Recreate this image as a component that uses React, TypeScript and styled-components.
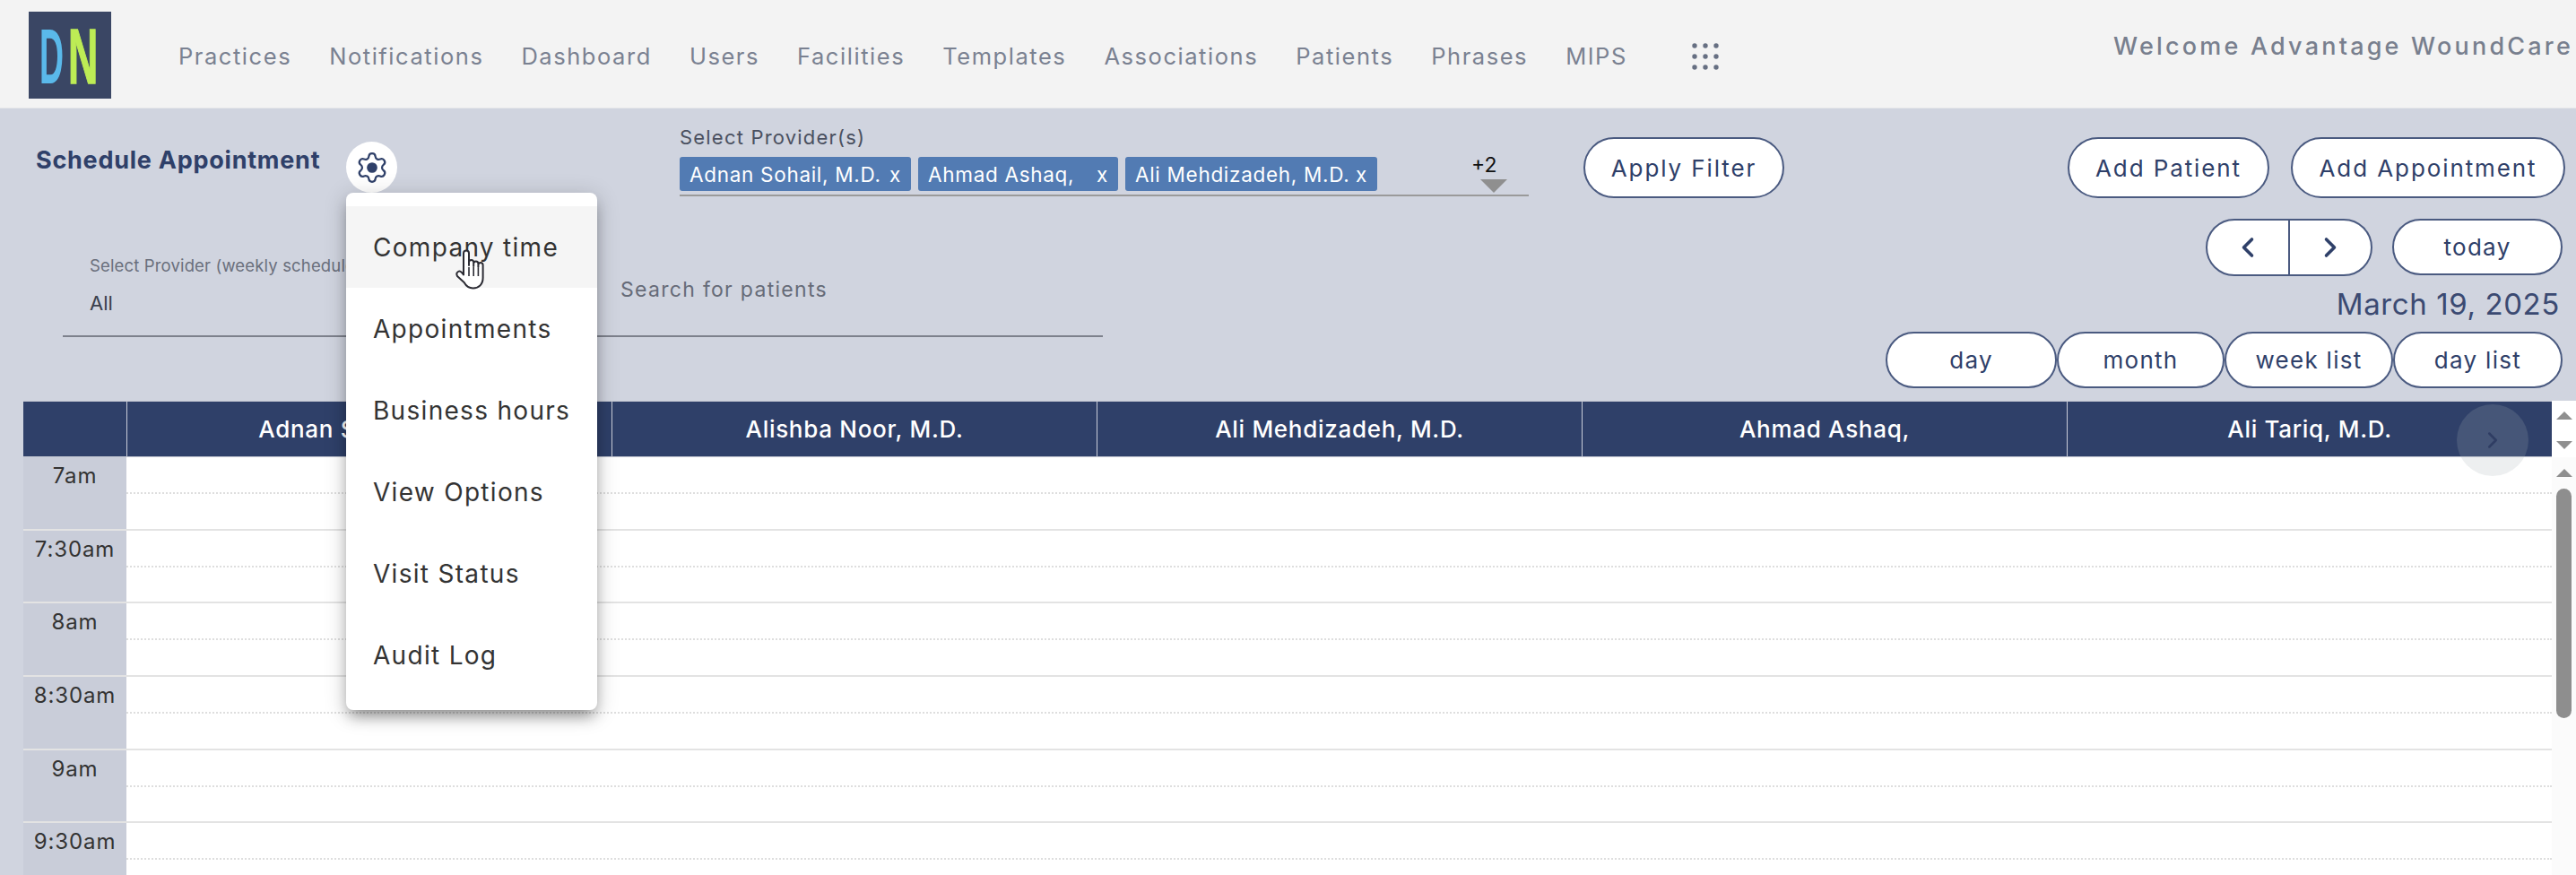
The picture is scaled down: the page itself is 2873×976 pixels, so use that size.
import React from "react";
import styled, { createGlobalStyle } from "styled-components";
import { ChevronLeft, ChevronRight, Settings } from "lucide-react";

const navy = "#2f4069";
const fontStack = `Inter, "Open Sans", "Liberation Sans", sans-serif`;

const GlobalStyle = createGlobalStyle`
  html, body {
    margin: 0;
    padding: 0;
    width: 2873px;
    height: 976px;
    overflow: hidden;
    background: #d0d4df;
    font-family: ${fontStack};
  }
  * {
    box-sizing: border-box;
  }
`;

const Page = styled.div`
  width: 2873px;
  height: 976px;
  overflow: hidden;
  display: flex;
  flex-direction: column;
`;

const Header = styled.header`
  height: 121px;
  flex: none;
  background: #f3f3f3;
  border-bottom: 1px solid #e6e7ea;
  display: flex;
  padding-left: 32px;
`;

const LogoBox = styled.svg`
  width: 92px;
  height: 97px;
  margin-top: 13px;
  flex: none;
  overflow: visible;
`;

const NavList = styled.nav`
  display: flex;
  align-items: center;
  gap: 42px;
  margin-left: 75px;
  height: 125px;
  flex: none;
`;

const NavItem = styled.span`
  font-size: 25.5px;
  letter-spacing: 1.55px;
  color: #7a8191;
  white-space: nowrap;
`;

const DotsIcon = styled.svg`
  width: 32px;
  height: 32px;
  margin-left: 29px;
  flex: none;
`;

const Welcome = styled.div`
  margin-left: auto;
  padding: 35px 3px 0 0;
  font-size: 27px;
  font-weight: 500;
  letter-spacing: 3.2px;
  color: #787f8e;
  white-space: nowrap;
`;

const Toolbar = styled.section`
  height: 326px;
  flex: none;
  display: flex;
  justify-content: space-between;
  padding: 32px 12px 0 40px;
`;

const LeftColumn = styled.div`
  display: flex;
  flex-direction: column;
`;

const TopRow = styled.div`
  display: flex;
  align-items: flex-start;
`;

const Title = styled.h1`
  margin: 10px 0 0;
  width: 346px;
  font-size: 27px;
  line-height: 32px;
  font-weight: 700;
  letter-spacing: 0.75px;
  color: ${navy};
  white-space: nowrap;
`;

const GearWrap = styled.div`
  position: relative;
  width: 57px;
  height: 57px;
  margin-top: 5px;
  flex: none;
`;

const GearButton = styled.div`
  width: 57px;
  height: 57px;
  border-radius: 50%;
  background: #fff;
  display: flex;
  align-items: center;
  justify-content: center;
  color: ${navy};

  svg circle {
    fill: ${navy};
  }
`;

const Menu = styled.ul`
  position: absolute;
  z-index: 5;
  top: 57px;
  left: 0;
  width: 280px;
  margin: 0;
  padding: 15px 0 16px;
  list-style: none;
  background: #fff;
  border-radius: 8px;
  box-shadow: 0 10px 16px -4px rgba(0, 0, 0, 0.38), 0 4px 24px 2px rgba(0, 0, 0, 0.16);
`;

const MenuItem = styled.li<{ $active?: boolean }>`
  height: 91px;
  display: flex;
  align-items: center;
  padding-left: 30px;
  font-size: 28px;
  letter-spacing: 1.3px;
  color: #333;
  background: ${(p) => (p.$active ? "#f5f5f5" : "#fff")};
  white-space: nowrap;
`;

const HandCursor = styled.svg`
  position: absolute;
  z-index: 6;
  left: 120px;
  top: 118px;
  width: 38px;
  height: 48px;
`;

const ProviderField = styled.div`
  width: 947px;
  margin-left: 315px;
  flex: none;
  position: relative;
  height: 66px;
  border-bottom: 2px solid #9a9a9a;
`;

const ProviderLabel = styled.div`
  font-size: 22px;
  line-height: 26px;
  margin-top: -13px;
  margin-bottom: 9px;
  letter-spacing: 1.2px;
  color: #4a5060;
`;

const ChipRow = styled.div`
  display: flex;
  gap: 8px;
`;

const Chip = styled.div<{ $w: number }>`
  width: ${(p) => p.$w}px;
  height: 38px;
  padding: 0 11px 0 11px;
  background: #527bb3;
  border-radius: 3px;
  color: #fff;
  font-size: 22.5px;
  letter-spacing: 0.7px;
  display: flex;
  align-items: center;
  justify-content: space-between;
  white-space: nowrap;
`;

const MoreCount = styled.span`
  position: absolute;
  left: 883px;
  top: 17px;
  font-size: 23px;
  line-height: 28px;
  color: #111;
`;

const DropArrow = styled.span`
  position: absolute;
  left: 893px;
  top: 47px;
  width: 0;
  height: 0;
  border-left: 15px solid transparent;
  border-right: 15px solid transparent;
  border-top: 15px solid #8f8f8f;
`;

const Pill = styled.button<{ $w: number; $h?: number }>`
  width: ${(p) => p.$w}px;
  height: ${(p) => p.$h ?? 68}px;
  flex: none;
  padding: 0;
  background: #fff;
  border: 2px solid #4a5a80;
  border-radius: ${(p) => (p.$h ?? 68) / 2}px;
  font-family: ${fontStack};
  font-size: 26px;
  letter-spacing: 1.3px;
  color: ${navy};
  white-space: nowrap;
`;

const ActionPill = styled(Pill)`
  letter-spacing: 1.9px;
`;

const ApplyWrap = styled.div`
  margin-left: 61px;
`;

const FieldRow = styled.div`
  display: flex;
  width: 1160px;
  margin: 56px 0 0 30px;
  height: 99px;
  border-bottom: 2px solid #7d818c;
`;

const SelectField = styled.div`
  width: 622px;
  padding: 7px 0 0 30px;
  flex: none;
`;

const SmallLabel = styled.div`
  font-size: 18.5px;
  line-height: 24px;
  letter-spacing: 0.15px;
  color: #6a6f7c;
  white-space: nowrap;
`;

const SelectValue = styled.div`
  font-size: 22px;
  line-height: 28px;
  margin-top: 16px;
  color: #3a3f4c;
`;

const SearchPlaceholder = styled.div`
  font-size: 23px;
  line-height: 28px;
  letter-spacing: 1.3px;
  color: #666b78;
  padding-top: 32px;
  white-space: nowrap;
`;

const RightColumn = styled.div`
  display: flex;
  flex-direction: column;
  align-items: flex-end;
`;

const ButtonRow = styled.div<{ $gap?: number; $mr?: number; $mt?: number }>`
  display: flex;
  gap: ${(p) => p.$gap ?? 0}px;
  margin-right: ${(p) => p.$mr ?? 0}px;
  margin-top: ${(p) => p.$mt ?? 0}px;
`;

const PagerGroup = styled.div`
  width: 186px;
  height: 64px;
  display: flex;
  background: #fff;
  border: 2px solid #4a5a80;
  border-radius: 32px;
  color: ${navy};
`;

const PagerCell = styled.div<{ $divided?: boolean }>`
  flex: 1;
  display: flex;
  align-items: center;
  justify-content: center;
  border-left: ${(p) => (p.$divided ? "2px solid #4a5a80" : "none")};
`;

const DateLabel = styled.div`
  margin: 10px 6px 0 0;
  font-size: 33px;
  line-height: 42px;
  letter-spacing: 0.6px;
  color: #3b4a72;
  white-space: nowrap;
`;

const Calendar = styled.section`
  flex: 1;
  min-height: 0;
  display: flex;
  padding-left: 26px;
`;

const CalendarMain = styled.div`
  width: 2820px;
  flex: none;
  position: relative;
  display: flex;
  flex-direction: column;
`;

const HeadRow = styled.div`
  height: 63px;
  flex: none;
  display: grid;
  grid-template-columns: 115px repeat(5, 1fr);
  background: ${navy};
  border-top: 1px solid #c3c7d2;
  border-bottom: 1px solid #c3c7d2;
`;

const HeadCell = styled.div`
  display: flex;
  align-items: center;
  justify-content: center;
  border-left: 1px solid #c9cdd9;
  color: #fff;
  font-size: 26px;
  font-weight: 500;
  letter-spacing: 0.7px;
  white-space: nowrap;

  &:first-child {
    border-left: none;
  }
`;

const Rows = styled.div`
  flex: 1;
  min-height: 0;
  overflow: hidden;
`;

const Slot = styled.div<{ $major: boolean }>`
  height: 40.85px;
  display: grid;
  grid-template-columns: 115px 1fr;
  border-bottom: ${(p) => (p.$major ? "2px dotted #dedede" : "2px solid #e3e3e3")};
  background: #fff;
`;

const TimeCell = styled.div`
  background: #c9cdd9;
  text-align: center;
  font-size: 24px;
  line-height: 42px;
  letter-spacing: 0.9px;
  color: #333;
`;

const ScrollFloat = styled.div`
  position: absolute;
  left: 2714px;
  top: 4px;
  width: 80px;
  height: 80px;
  border-radius: 50%;
  background: rgba(165, 175, 180, 0.2);
  display: flex;
  align-items: center;
  justify-content: center;
  color: #2f3d63;
`;

const ScrollRail = styled.aside`
  flex: 1;
  display: flex;
  flex-direction: column;
  align-items: center;
  background: #fbfbfb;
`;

const RailHead = styled.div`
  height: 63px;
  flex: none;
  align-self: stretch;
  background: #fff;
  display: flex;
  flex-direction: column;
  align-items: center;
  padding-top: 12px;
  gap: 24px;
`;

const RailArrow = styled.span<{ $down?: boolean }>`
  display: block;
  width: 0;
  height: 0;
  flex: none;
  border-left: 9px solid transparent;
  border-right: 9px solid transparent;
  border-bottom: ${(p) => (p.$down ? "none" : "9px solid #8f8f8f")};
  border-top: ${(p) => (p.$down ? "9px solid #8f8f8f" : "none")};
`;

const RailTop = styled.div`
  height: 35px;
  flex: none;
  padding-top: 13px;
`;

const RailThumb = styled.div`
  width: 17px;
  height: 256px;
  flex: none;
  border-radius: 9px;
  background: #8e8e8e;
`;

const navItems = [
  "Practices",
  "Notifications",
  "Dashboard",
  "Users",
  "Facilities",
  "Templates",
  "Associations",
  "Patients",
  "Phrases",
  "MIPS",
];

const menuItems = ["Company time", "Appointments", "Business hours", "View Options", "Visit Status", "Audit Log"];

const columns = ["Adnan Sohail, M.D.", "Alishba Noor, M.D.", "Ali Mehdizadeh, M.D.", "Ahmad Ashaq,", "Ali Tariq, M.D."];

const times = ["7am", "", "7:30am", "", "8am", "", "8:30am", "", "9am", "", "9:30am", ""];

const Logo = () => (
  <LogoBox viewBox='0 0 92 97'>
    <rect width='92' height='97' fill='#3a4664' />
    <text
      transform='translate(12 80) scale(0.43 1)'
      fontFamily='Liberation Sans'
      fontWeight='700'
      fontSize='87'
      fill='#5ab9ea'>
      D
    </text>
    <text
      transform='translate(44 80) scale(0.53 1)'
      fontFamily='Liberation Sans'
      fontWeight='700'
      fontSize='87'
      fill='#bdec55'
      stroke='#bdec55'
      strokeWidth='1.5'>
      N
    </text>
  </LogoBox>
);

const Dots = () => (
  <DotsIcon viewBox='0 0 32 32' fill='#666f82'>
    {[4, 16, 28].map((y) =>
      [4, 16, 28].map((x) => <circle key={`${x}-${y}`} cx={x} cy={y} r='2.7' />)
    )}
  </DotsIcon>
);

const Hand = () => (
  <HandCursor viewBox='0 0 38 48'>
    <path
      d='M11 27V6.5a3 3 0 0 1 6 0V20v-3.5a2.6 2.6 0 0 1 5.2 0V21v-3a2.6 2.6 0 0 1 5.2 0v4v-2.4a2.6 2.6 0 0 1 5.2 0V34c0 7-4.5 11.5-11 11.5c-5 0-7.5-2-10-6.5L4 32c-1.2-2.2-.6-4 1-5s3.5-.6 6 3.5z'
      fill='#fff'
      stroke='#2b2b33'
      strokeWidth='2'
      strokeLinejoin='round'
    />
    <path d='M17 22v10M22.2 22v10M27.4 23v9' stroke='#2b2b33' strokeWidth='1.6' fill='none' />
  </HandCursor>
);

export default function App() {
  return (
    <Page>
      <GlobalStyle />
      <Header>
        <Logo />
        <NavList>
          {navItems.map((item) => (
            <NavItem key={item}>{item}</NavItem>
          ))}
          <Dots />
        </NavList>
        <Welcome>Welcome Advantage WoundCare</Welcome>
      </Header>

      <Toolbar>
        <LeftColumn>
          <TopRow>
            <Title>Schedule Appointment</Title>
            <GearWrap>
              <GearButton>
                <Settings size={38} strokeWidth={1.4} />
              </GearButton>
              <Menu>
                {menuItems.map((item, i) => (
                  <MenuItem key={item} $active={i === 0}>
                    {item}
                  </MenuItem>
                ))}
              </Menu>
              <Hand />
            </GearWrap>
            <ProviderField>
              <ProviderLabel>Select Provider(s)</ProviderLabel>
              <ChipRow>
                <Chip $w={258}>
                  <span>Adnan Sohail, M.D.</span>
                  <span>x</span>
                </Chip>
                <Chip $w={223}>
                  <span>Ahmad Ashaq,</span>
                  <span>x</span>
                </Chip>
                <Chip $w={281}>
                  <span>Ali Mehdizadeh, M.D.</span>
                  <span>x</span>
                </Chip>
              </ChipRow>
              <MoreCount>+2</MoreCount>
              <DropArrow />
            </ProviderField>
            <ApplyWrap>
              <ActionPill $w={224}>Apply Filter</ActionPill>
            </ApplyWrap>
          </TopRow>
          <FieldRow>
            <SelectField>
              <SmallLabel>Select Provider (weekly schedule)</SmallLabel>
              <SelectValue>All</SelectValue>
            </SelectField>
            <SearchPlaceholder>Search for patients</SearchPlaceholder>
          </FieldRow>
        </LeftColumn>

        <RightColumn>
          <ButtonRow $gap={24}>
            <ActionPill $w={225}>Add Patient</ActionPill>
            <ActionPill $w={306}>Add Appointment</ActionPill>
          </ButtonRow>
          <ButtonRow $gap={22} $mr={3} $mt={23}>
            <PagerGroup>
              <PagerCell>
                <ChevronLeft size={36} strokeWidth={2.4} />
              </PagerCell>
              <PagerCell $divided>
                <ChevronRight size={36} strokeWidth={2.4} />
              </PagerCell>
            </PagerGroup>
            <Pill $w={190} $h={63}>
              today
            </Pill>
          </ButtonRow>
          <DateLabel>March 19, 2025</DateLabel>
          <ButtonRow $mr={3} $mt={10}>
            <Pill $w={191} $h={63}>
              day
            </Pill>
            <Pill $w={187} $h={63}>
              month
            </Pill>
            <Pill $w={188} $h={63}>
              week list
            </Pill>
            <Pill $w={189} $h={63}>
              day list
            </Pill>
          </ButtonRow>
        </RightColumn>
      </Toolbar>

      <Calendar>
        <CalendarMain>
          <HeadRow>
            <HeadCell />
            {columns.map((name) => (
              <HeadCell key={name}>{name}</HeadCell>
            ))}
          </HeadRow>
          <Rows>
            {times.map((label, i) => (
              <Slot key={i} $major={i % 2 === 0}>
                <TimeCell>{label}</TimeCell>
                <div />
              </Slot>
            ))}
          </Rows>
          <ScrollFloat>
            <ChevronRight size={30} strokeWidth={2} />
          </ScrollFloat>
        </CalendarMain>
        <ScrollRail>
          <RailHead>
            <RailArrow />
            <RailArrow $down />
          </RailHead>
          <RailTop>
            <RailArrow />
          </RailTop>
          <RailThumb />
        </ScrollRail>
      </Calendar>
    </Page>
  );
}
